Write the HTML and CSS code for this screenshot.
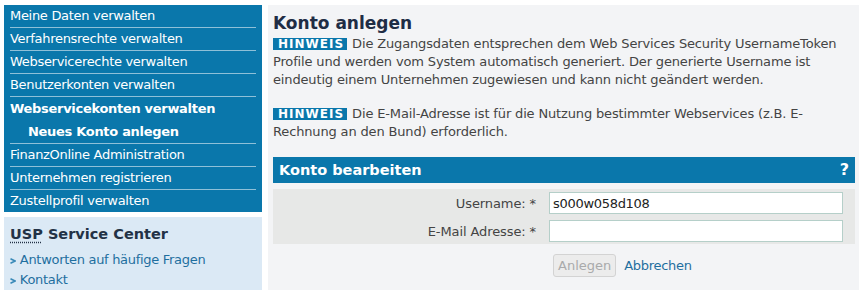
FILE: index.html
```html
<!DOCTYPE html>
<html lang="de">
<head>
    <meta charset="UTF-8">
    <title>Konto anlegen</title>
    <link rel="stylesheet" href="styles.css">
</head>
<body>
    <div class="page">
        <div class="sidebar">
            <ul class="nav">
                <li><a href="#">Meine Daten verwalten</a></li>
                <li><a href="#">Verfahrensrechte verwalten</a></li>
                <li><a href="#">Webservicerechte verwalten</a></li>
                <li><a href="#">Benutzerkonten verwalten</a></li>
                <li class="active open"><a href="#">Webservicekonten verwalten</a></li>
                <li class="active sub"><a href="#">Neues Konto anlegen</a></li>
                <li><a href="#">FinanzOnline Administration</a></li>
                <li><a href="#">Unternehmen registrieren</a></li>
                <li class="last"><a href="#">Zustellprofil verwalten</a></li>
            </ul>
            <div class="service">
                <h2><abbr title="Unternehmensserviceportal">USP</abbr> Service Center</h2>
                <a class="service-link" href="#"><svg class="arrow" width="6" height="6" viewBox="0 0 6 6"><polyline points="0.5,0.8 5,3 0.5,5.2" fill="none" stroke="#3a8ab8" stroke-width="1.6"/></svg> Antworten auf häufige Fragen</a>
                <a class="service-link" href="#"><svg class="arrow" width="6" height="6" viewBox="0 0 6 6"><polyline points="0.5,0.8 5,3 0.5,5.2" fill="none" stroke="#3a8ab8" stroke-width="1.6"/></svg> Kontakt</a>
            </div>
        </div>
        <div class="content">
            <h1>Konto anlegen</h1>
            <p class="note"><span class="badge">HINWEIS</span> Die Zugangsdaten entsprechen dem Web Services Security UsernameToken Profile und werden vom System automatisch generiert. Der generierte Username ist eindeutig einem Unternehmen zugewiesen und kann nicht geändert werden.</p>
            <p class="note"><span class="badge">HINWEIS</span> Die E-Mail-Adresse ist für die Nutzung bestimmter Webservices (z.B. E-Rechnung an den Bund) erforderlich.</p>
            <div class="panel">
                <div class="panel-head">
                    <span>Konto bearbeiten</span>
                    <span class="help">?</span>
                </div>
                <div class="form">
                    <label class="form-label" for="user">Username: *</label>
                    <input class="form-input" id="user" type="text" value="s000w058d108">
                    <label class="form-label" for="mail">E-Mail Adresse: *</label>
                    <input class="form-input" id="mail" type="text">
                </div>
                <div class="actions">
                    <button class="btn" disabled>Anlegen</button>
                    <a class="cancel" href="#">Abbrechen</a>
                </div>
            </div>
        </div>
    </div>
</body>
</html>
```

FILE: styles.css
```css
body {
    margin: 0;
    padding: 5px 0 0 4px;
    font-family: Verdana, "DejaVu Sans", sans-serif;
    font-size: 13px;
    background: #ffffff;
    color: #444;
    overflow: hidden;
}
.page {
    display: flex;
    gap: 6px;
    align-items: flex-start;
}
.sidebar {
    width: 258px;
    flex-shrink: 0;
}
.nav {
    list-style: none;
    margin: 0;
    padding: 0 6px;
    background-color: #0a77ab;
}
.nav li {
    border-bottom: 1px solid #8fc0d8;
}
.nav li a {
    display: block;
    color: #fff;
    text-decoration: none;
    line-height: 22px;
    white-space: nowrap;
    letter-spacing: -0.3px;
}
.nav li.active a {
    font-weight: bold;
}
.nav li.open {
    border-bottom: none;
}
.nav li.open a {
    line-height: 23px;
}
.nav li.sub a {
    padding-left: 18px;
    line-height: 23px;
}
.nav li.last {
    border-bottom: none;
}
.service {
    margin-top: 5px;
    background-color: #dbe9f5;
    padding: 6px 6px 0 6px;
    height: 69px;
}
.service h2 {
    margin: 0 0 5px 0;
    font-size: 14.5px;
    line-height: 22px;
    color: #233246;
}
.service abbr {
    text-decoration: underline dotted;
    text-underline-offset: 3px;
}
.service-link {
    display: block;
    color: #1f6f9f;
    text-decoration: none;
    line-height: 20px;
    letter-spacing: -0.3px;
}
.arrow {
    vertical-align: 0;
}
.content {
    flex: 1;
    background-color: #f3f4f6;
    padding: 6px 5px 0 5px;
    height: 279px;
}
.content h1 {
    margin: 0;
    font-size: 17px;
    line-height: 24px;
    color: #1f2d45;
}
.note {
    margin: 0 0 16px 0;
    line-height: 18px;
    letter-spacing: -0.15px;
    color: #444;
}
.badge {
    display: inline-block;
    background-color: #0a77ab;
    color: #fff;
    font-weight: bold;
    font-size: 12px;
    line-height: 12px;
    padding: 0 3px 0 5px;
    margin-right: 1px;
    letter-spacing: 1px;
}
.panel-head {
    display: flex;
    justify-content: space-between;
    background-color: #0a77ab;
    color: #fff;
    font-weight: bold;
    font-size: 14.5px;
    line-height: 26px;
    padding: 0 6px;
}
.help {
    font-size: 16px;
}
.form {
    display: grid;
    grid-template-columns: 263px 294px;
    column-gap: 13px;
    row-gap: 6px;
    align-items: center;
    margin-top: 6px;
    padding: 3px 12px 2px 0;
    background-color: #e7e8e7;
}
.form-label {
    text-align: right;
    letter-spacing: -0.1px;
}
.form-input {
    box-sizing: border-box;
    height: 22px;
    border: 1px solid #b5cfc9;
    font-family: Verdana, "DejaVu Sans", sans-serif;
    font-size: 13px;
    letter-spacing: -0.3px;
    padding: 0 3px;
    color: #222;
}
.actions {
    display: flex;
    align-items: center;
    gap: 8px;
    padding-left: 280px;
    margin-top: 10px;
}
.btn {
    font-family: Verdana, "DejaVu Sans", sans-serif;
    font-size: 13px;
    color: #a9aaab;
    background-color: #ececec;
    border: 1px solid #d3d3d3;
    border-radius: 3px;
    padding: 3px 4px;
    height: 23px;
}
.cancel {
    color: #1f6f9f;
    text-decoration: none;
    letter-spacing: -0.3px;
}
```
